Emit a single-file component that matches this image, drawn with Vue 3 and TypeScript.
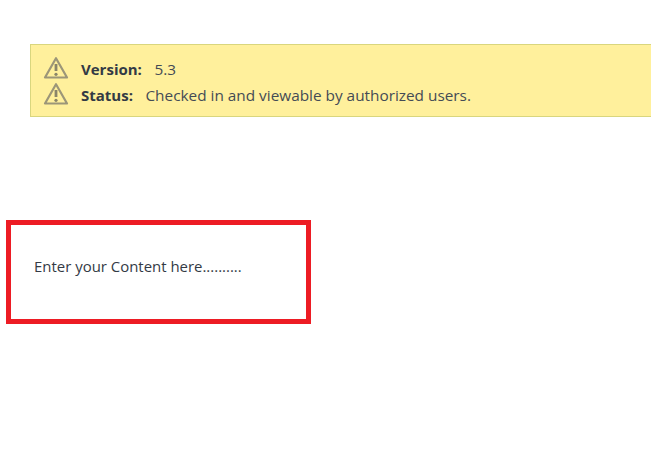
<script setup lang="ts">
interface Row { label: string; value: string }
const rows: Row[] = [
  { label: 'Version:', value: '5.3' },
  { label: 'Status:', value: 'Checked in and viewable by authorized users.' },
]
</script>

<template>
  <div class="page">
    <section class="banner">
      <div v-for="row in rows" :key="row.label" class="row">
        <svg class="icon" width="26" height="24" viewBox="0 0 26 24" fill="none">
          <path d="M13 2.2 L24 21.5 H2 Z" stroke="#9c9678" stroke-width="2.2" stroke-linejoin="round" />
          <path d="M13 8 V15" stroke="#8a8569" stroke-width="2.8" />
          <circle cx="13" cy="18.3" r="1.6" fill="#8a8569" />
        </svg>
        <strong class="label">{{ row.label }}</strong>
        <span class="value">{{ row.value }}</span>
      </div>
    </section>
    <div class="editor">Enter your Content here..........</div>
  </div>
</template>

<style>
html, body { margin: 0; background: #fff; overflow: hidden; }
</style>

<style scoped>
.page {
  width: 651px;
  height: 458px;
  overflow: hidden;
  box-sizing: border-box;
  padding-top: 44px;
  font-family: "Open Sans", "Noto Sans", sans-serif;
  font-size: 15px;
  color: #333a45;
}
.banner {
  margin-left: 30px;
  box-sizing: border-box;
  width: 621px;
  height: 73px;
  padding: 11px 0 0 12px;
  background: #fff09c;
  border: 1px solid #d9d67e;
  border-right: 0;
}
.row {
  display: flex;
  align-items: center;
  height: 26px;
}
.icon { flex: none; margin-right: 12px; margin-top: -2px; }
.label { font-weight: 700; margin-right: 12.5px; }
.value { color: #444b55; font-size: 15.35px; }
.editor {
  box-sizing: border-box;
  width: 305px;
  height: 104px;
  margin: 103px 0 0 6px;
  padding: 31px 0 0 23px;
  border: 5px solid #ed1c24;
  font-size: 14.95px;
  line-height: 20px;
}
</style>
